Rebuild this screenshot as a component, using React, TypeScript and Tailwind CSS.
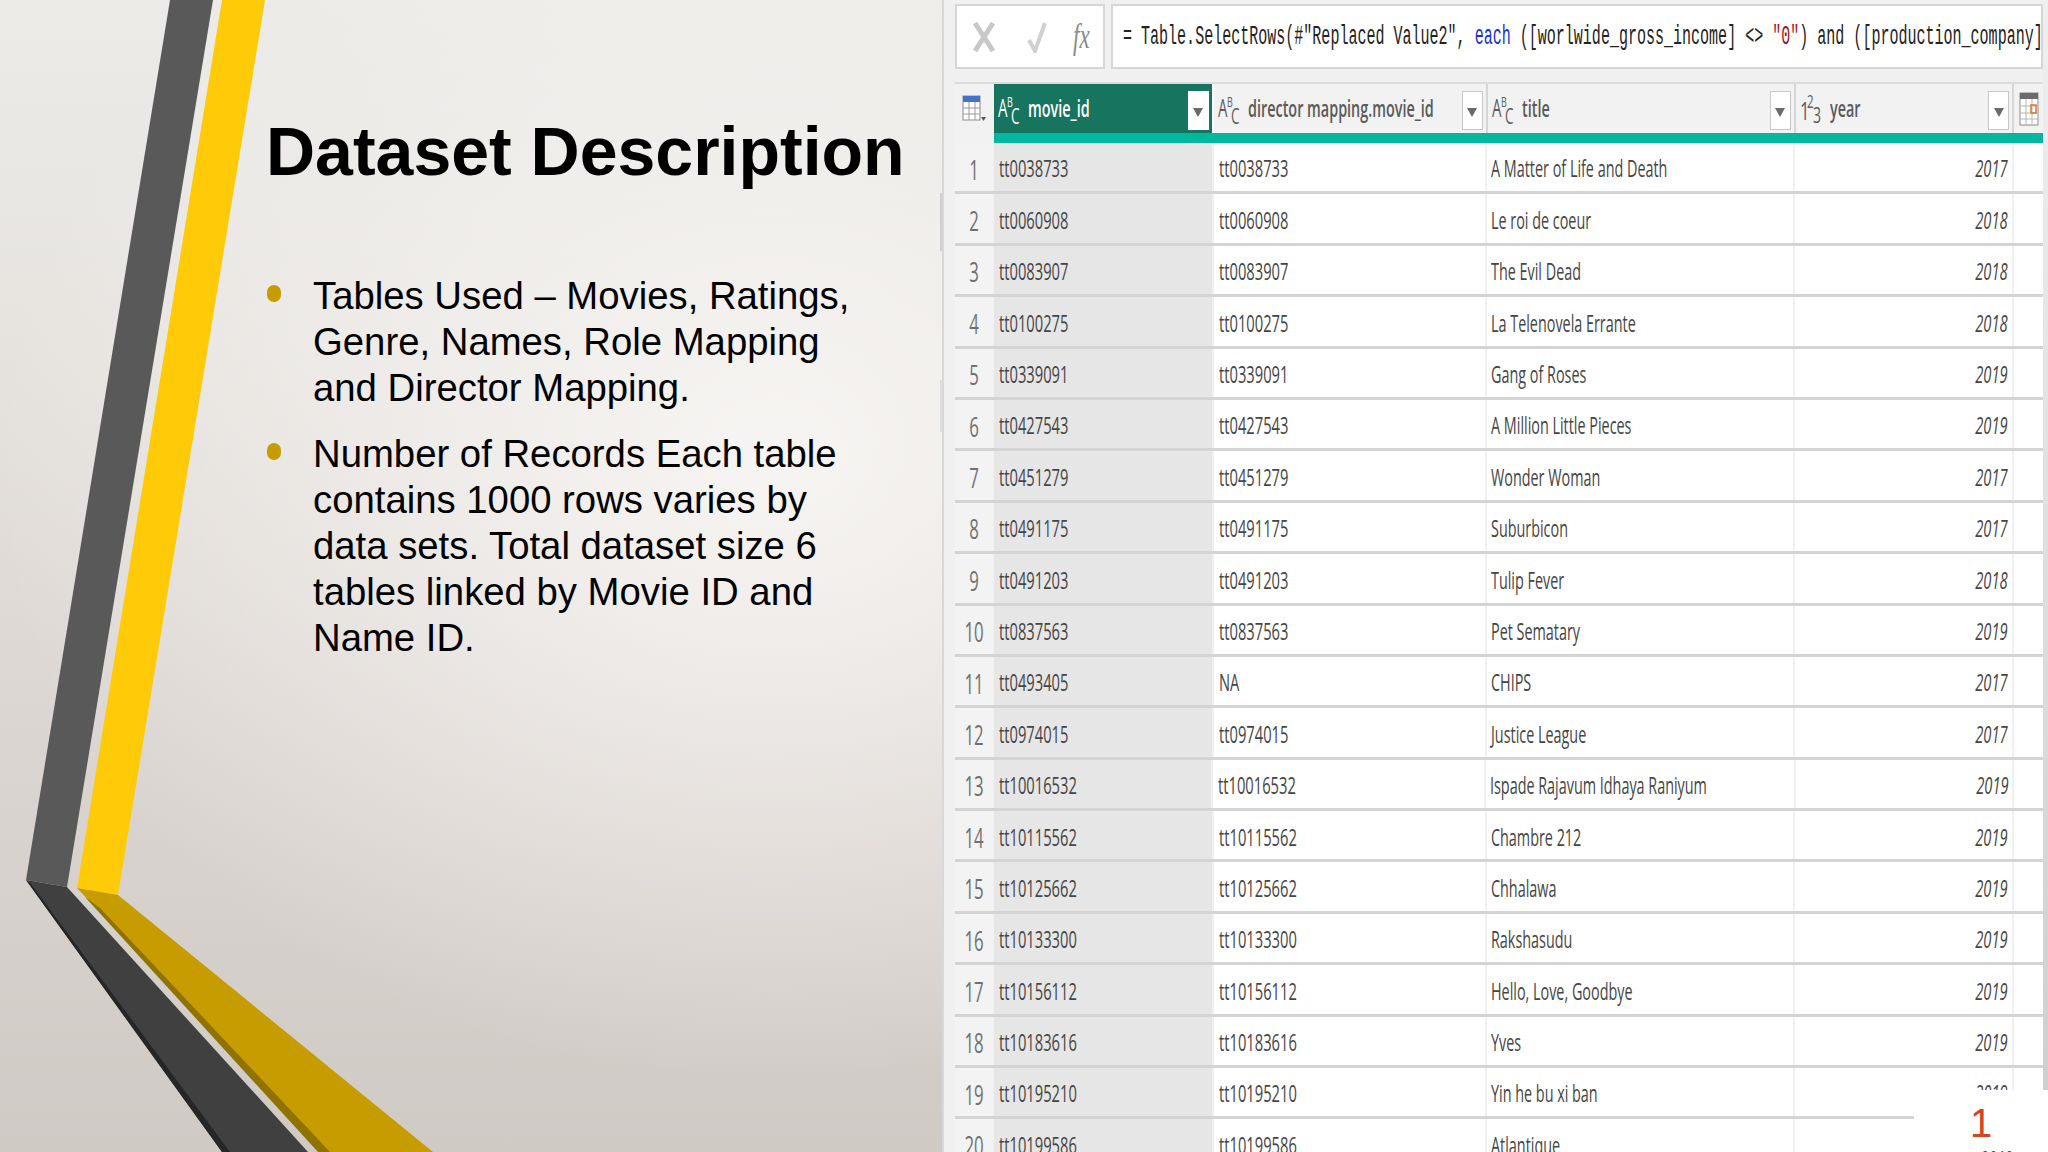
const rows = [
  ["tt0038733", "tt0038733", "A Matter of Life and Death", "2017"],
  ["tt0060908", "tt0060908", "Le roi de coeur", "2018"],
  ["tt0083907", "tt0083907", "The Evil Dead", "2018"],
  ["tt0100275", "tt0100275", "La Telenovela Errante", "2018"],
  ["tt0339091", "tt0339091", "Gang of Roses", "2019"],
  ["tt0427543", "tt0427543", "A Million Little Pieces", "2019"],
  ["tt0451279", "tt0451279", "Wonder Woman", "2017"],
  ["tt0491175", "tt0491175", "Suburbicon", "2017"],
  ["tt0491203", "tt0491203", "Tulip Fever", "2018"],
  ["tt0837563", "tt0837563", "Pet Sematary", "2019"],
  ["tt0493405", "NA", "CHIPS", "2017"],
  ["tt0974015", "tt0974015", "Justice League", "2017"],
  ["tt10016532", "tt10016532", "Ispade Rajavum Idhaya Raniyum", "2019"],
  ["tt10115562", "tt10115562", "Chambre 212", "2019"],
  ["tt10125662", "tt10125662", "Chhalawa", "2019"],
  ["tt10133300", "tt10133300", "Rakshasudu", "2019"],
  ["tt10156112", "tt10156112", "Hello, Love, Goodbye", "2019"],
  ["tt10183616", "tt10183616", "Yves", "2019"],
  ["tt10195210", "tt10195210", "Yin he bu xi ban", "2019"],
  ["tt10199586", "tt10199586", "Atlantique", ""],
];

const Stripes = () => (
  <svg className="absolute inset-0" width="942" height="1152" viewBox="0 0 942 1152">
    <polygon points="170,0 213,0 67,887 26,880" fill="#595959" />
    <polygon points="222,0 265,0 118,895 77,888" fill="#ffca08" />
    <polygon points="26,880 67,887 308,1152 222,1152" fill="#404040" />
    <polygon points="26,880 31,884 230,1152 222,1152" fill="#262626" />
    <polygon points="77,888 118,895 433,1152 327,1152" fill="#c69c00" />
    <polygon points="85,897 100,908 330,1152 318,1152" fill="#8f7200" />
  </svg>
);

const Squeeze = ({ children, className = "" }: { children: React.ReactNode; className?: string }) => (
  <span className={"inline-block whitespace-nowrap origin-left scale-x-[0.64] " + className}>{children}</span>
);

const TypeIcon = ({ light = false }: { light?: boolean }) => (
  <span className={"relative inline-block w-[20px] h-[34px] shrink-0 font-['Open_Sans',sans-serif] font-normal " + (light ? "text-white" : "text-[#5c5c5c]")}>
    <span className="absolute left-0 top-[3px] text-[25px] leading-none origin-left scale-x-[0.6]">A</span>
    <span className="absolute left-[9px] top-[3px] text-[14px] leading-none origin-left scale-x-[0.64]">B</span>
    <span className="absolute left-[13px] top-[14px] text-[21px] leading-none origin-left scale-x-[0.64]">C</span>
  </span>
);

const NumIcon = () => (
  <span className="relative inline-block w-[20px] h-[34px] shrink-0 font-['Open_Sans',sans-serif] font-normal text-[#5c5c5c]">
    <span className="absolute left-0 top-[5px] text-[26px] leading-none origin-left scale-x-[0.64]">1</span>
    <span className="absolute left-[7px] top-[0px] text-[18px] leading-none origin-left scale-x-[0.64]">2</span>
    <span className="absolute left-[13px] top-[11px] text-[22px] leading-none origin-left scale-x-[0.64]">3</span>
  </span>
);

const FilterButton = ({ active = false }: { active?: boolean }) => (
  <div className={"flex justify-center pt-[16px] mt-[3px] w-[21px] h-[39px] bg-white shrink-0 border " + (active ? "border-white" : "border-[#c8c8c8]")}>
    <div className="w-0 h-0 border-x-[5px] border-x-transparent border-t-[9px] border-t-[#6a6a6a]" />
  </div>
);

const HeaderCell = ({ label, width, active, num }: { label: string; width: string; active?: boolean; num?: boolean }) => (
  <div className={"flex items-center justify-between h-[50px] pl-[4px] pr-[3px] " + width + " " + (active ? "bg-[#17745f]" : "bg-[#f2f2f2]")}>
    <div className="flex items-center gap-[10px] min-w-0">
      {num ? <NumIcon /> : <TypeIcon light={active} />}
      <Squeeze className={"text-[22.5px] font-semibold " + (active ? "text-white" : "text-[#5a5a5a]")}>{label}</Squeeze>
    </div>
    <FilterButton active={active} />
  </div>
);

const Row = ({ index, cells }: { index: number; cells: string[] }) => (
  <div className="flex h-[51.4px] shrink-0 border-b-[3px] border-[#d4d4d4] text-[23px] text-[#454545]">
    <div className="flex items-center justify-center w-[38px] mr-[1px] pt-[3px] bg-[#f3f3f3] text-[#707070] text-[28px]">
      <span className="inline-block scale-x-[0.6]">{index}</span>
    </div>
    <div className="flex items-center w-[219px] pl-[5px] pt-[3px] bg-[#e6e6e6]"><Squeeze>{cells[0]}</Squeeze></div>
    <div className="flex items-center w-[272px] ml-[2px] pl-[5px] pt-[3px] bg-white"><Squeeze>{cells[1]}</Squeeze></div>
    <div className="flex items-center w-[308px] ml-[2px] pl-[4px] pt-[3px] bg-white"><Squeeze className="scale-x-[0.625]">{cells[2]}</Squeeze></div>
    <div className="flex items-center justify-end w-[218px] ml-[2px] pr-[4px] pt-[3px] bg-white italic">
      <span className="inline-block origin-right scale-x-[0.64]">{cells[3]}</span>
    </div>
    <div className="w-[29px] ml-[2px] bg-white" />
  </div>
);

export default function App() {
  return (
    <div className="flex w-[2048px] h-[1152px] overflow-hidden bg-white">
      {/* slide */}
      <div className="relative w-[942px] h-full shrink-0 bg-[radial-gradient(ellipse_780px_620px_at_82%_40%,rgba(248,246,244,0.95),rgba(248,246,244,0)),linear-gradient(to_bottom,#ecebe8_0%,#e6e3df_30%,#dcd6d2_62%,#d0cac5_100%)] font-['Liberation_Sans',Arial,sans-serif] text-black">
        <Stripes />
        <div className="absolute right-0 top-[193px] w-[2px] h-[58px] bg-[#cfcfcf]" />
        <div className="absolute right-0 top-[380px] w-[2px] h-[52px] bg-[#dedede]" />
        <div className="relative pl-[267px] pt-[113px]">
          <h1 className="-ml-px text-[68px] leading-[76px] font-bold whitespace-nowrap">Dataset Description</h1>
          <ul className="mt-[84px] flex flex-col gap-[21px] text-[38.3px] leading-[45.8px]">
            <li className="flex">
              <span className="w-[14px] h-[17px] mt-[12px] mr-[32px] rounded-full bg-[#c69c00] shrink-0" />
              <span className="w-[560px]">Tables Used – Movies, Ratings, Genre, Names, Role Mapping and Director Mapping.</span>
            </li>
            <li className="flex">
              <span className="w-[14px] h-[17px] mt-[12px] mr-[32px] rounded-full bg-[#c69c00] shrink-0" />
              <span className="w-[560px]">Number of Records Each table contains 1000 rows varies by data sets. Total dataset size 6 tables linked by Movie ID and Name ID.</span>
            </li>
          </ul>
        </div>
      </div>

      {/* power query screenshot */}
      <div className="relative flex-1 h-full overflow-hidden border-l-2 border-[#d8d8d8] bg-[#f0f0f0] pl-[11px] pr-[5px] pt-[4px] font-['Open_Sans',sans-serif]">
        <div className="absolute right-0 top-0 w-[5px] h-[1090px] bg-[linear-gradient(to_bottom,#efefef,#cfcfcf)]" />
        <div className="flex gap-[6px] h-[65px]">
          <div className="flex items-center pl-[16px] w-[150px] bg-white border-2 border-[#d6d6d6]">
            <svg width="22" height="32" viewBox="0 0 22 32" fill="none" stroke="#c8c8c8" strokeWidth="5"><path d="M2 2 20 30M20 2 2 30" /></svg>
            <svg className="ml-[31px]" width="22" height="32" viewBox="0 0 22 32" fill="none" stroke="#d0d0d0" strokeWidth="4"><path d="M3 19 9 30 19 2" /></svg>
            <span className="ml-[25px] font-['Liberation_Serif',serif] italic text-[#8a8a8a] text-[35px] leading-none origin-left scale-x-[0.66]">fx</span>
          </div>
          <div className="flex items-center flex-1 pl-[10px] pt-[2px] bg-white border-2 border-[#d6d6d6] overflow-hidden font-['Liberation_Mono',monospace] text-[27px] text-[#222]">
            <span className="inline-block whitespace-pre origin-left scale-x-[0.5565]">= Table.SelectRows(#"Replaced Value2", <span className="text-[#1a2fd0]">each</span> ([worlwide_gross_income] {"<>"} <span className="text-[#a31515]">"0"</span>) and ([production_company]</span>
          </div>
        </div>

        <div className="mt-[13px] flex h-[51px] border-t-2 border-[#dcdcdc] bg-[#f2f2f2]">
          <div className="flex items-center pl-[7px] w-[39px] shrink-0">
            <svg width="24" height="28" viewBox="0 0 24 28">
              <rect x="1" y="1" width="17" height="24" fill="#fff" stroke="#8a8a8a" />
              <rect x="1" y="1" width="17" height="6" fill="#4472c4" />
              <path d="M1 13H18M1 19H18M7 7V25M13 7V25" stroke="#9a9a9a" />
              <path d="M19 22 24 22 21.5 26Z" fill="#555" />
            </svg>
          </div>
          <HeaderCell label="movie_id" width="w-[219px]" active />
          <div className="w-[2px] bg-white" />
          <HeaderCell label="director mapping.movie_id" width="w-[272px]" />
          <div className="w-[2px] bg-[#d6d6d6]" />
          <HeaderCell label="title" width="w-[308px]" />
          <div className="w-[2px] bg-[#d6d6d6]" />
          <HeaderCell label="year" width="w-[218px]" num />
          <div className="w-[2px] bg-[#d6d6d6]" />
          <div className="flex items-center justify-center w-[29px]">
            <svg width="20" height="34" viewBox="0 0 20 34">
              <rect x="1" y="1" width="18" height="32" fill="#fff" stroke="#8c8c8c" />
              <rect x="1" y="1" width="18" height="6" fill="#6b6b6b" />
              <path d="M1 14H19M1 21H19M1 27H19M7 7V33M13 7V33" stroke="#b5b5b5" />
              <rect x="12" y="13" width="5" height="8" fill="none" stroke="#d9772b" strokeWidth="1.5" />
            </svg>
          </div>
        </div>

        <div className="flex h-[10px]">
          <div className="w-[39px] bg-[#f2f2f2]" />
          <div className="flex-1 bg-[#00b8a0]" />
        </div>

        <div className="flex flex-col">
          {rows.map((r, i) => (
            <Row key={r[0]} index={i + 1} cells={r} />
          ))}
        </div>

        {/* page number tab over the table */}
        <div className="absolute right-0 bottom-0 w-[73px] h-[62px] bg-white" />
        <div className="absolute right-0 bottom-0 w-[134px] h-[37px] bg-white">
          <span className="absolute left-[56px] top-[-12px] font-['Liberation_Sans',sans-serif] text-[#d8431f] text-[40px] leading-none">1</span>
          <span className="absolute right-[35px] top-[33px] inline-block origin-right scale-x-[0.64] italic text-[23px] leading-none text-[#454545]">2019</span>
        </div>
      </div>
    </div>
  );
}
